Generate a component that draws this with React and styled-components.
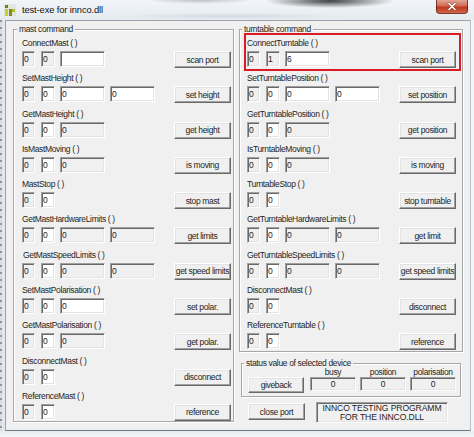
import React from 'react';
import styled, { createGlobalStyle, css } from 'styled-components';

const FONT = `"Liberation Sans", Arial, sans-serif`;

const Global = createGlobalStyle`
  html, body { margin: 0; padding: 0; overflow: hidden; background: #eef1f4; }
  body { width: 474px; height: 437px; }
  *, *::before, *::after { box-sizing: border-box; }
`;

const Window = styled.div`
  width: 474px;
  height: 437px;
  display: flex;
  flex-direction: column;
  overflow: hidden;
  font-family: ${FONT};
  color: #1e1e1e;
`;

const TitleBar = styled.div`
  height: 20px;
  flex: none;
  display: flex;
  align-items: center;
  padding-left: 4px;
  background:
    radial-gradient(ellipse 64px 7px at 330px 1px, rgba(35, 35, 35, 0.85), rgba(35, 35, 35, 0)),
    radial-gradient(ellipse 55px 4px at 200px 0px, rgba(70, 70, 70, 0.3), rgba(70, 70, 70, 0)),
    radial-gradient(ellipse 110px 3px at 230px 16px, rgba(120, 130, 140, 0.18), rgba(120, 130, 140, 0)),
    linear-gradient(#f2f5f8, #e5eaef);
`;

const AppIcon = styled.svg`
  width: 12px;
  height: 12px;
  flex: none;
`;

const TitleText = styled.div`
  margin-left: 6px;
  font-size: 9.3px;
  letter-spacing: -0.1px;
  color: #111;
  white-space: nowrap;
`;

const CloseButton = styled.div`
  margin-left: auto;
  margin-right: 6px;
  align-self: flex-start;
  width: 32px;
  height: 14px;
  display: flex;
  align-items: center;
  justify-content: center;
  border: 1px solid rgba(90, 30, 20, 0.75);
  border-top: none;
  border-radius: 0 0 4px 4px;
  background: linear-gradient(#e3a597 0%, #d06a55 45%, #c0381f 55%, #d0654a 100%);
`;

const FrameBody = styled.div`
  display: flex;
  height: 411px;
  flex: none;
`;

const LeftFrame = styled.div`
  width: 5px;
  flex: none;
  background:
    linear-gradient(90deg, rgba(228, 232, 236, 0) 0 2px, #e3e7eb 2px 100%),
    repeating-linear-gradient(180deg, #8f959b 0 2px, #d9dde1 2px 7px);
`;

const RightFrame = styled.div`
  width: 3px;
  flex: none;
  background: #f3f5f7;
`;

const BottomFrame = styled.div`
  height: 6px;
  flex: none;
  background: linear-gradient(#e9ecef, #f4f6f8);
`;

const Client = styled.div`
  flex: 1;
  display: flex;
  align-items: flex-start;
  gap: 5px;
  padding: 3px 0 0 7px;
  background: #f0f0f0;
  border-top: 1px solid #9aa4af;
  border-left: 1px solid #9aa4af;
  border-right: 1px solid #b9c1c9;
  border-bottom: 1px solid #6f7780;
`;

const Group = styled.fieldset`
  margin: 0;
  min-width: 0;
  width: ${(p) => p.$w}px;
  padding: 2px ${(p) => p.$pr}px ${(p) => p.$pb || 0}px ${(p) => p.$pl}px;
  border: 1px solid #a7a7a7;
  box-shadow: inset 1px 1px 0 #ffffff, 1px 1px 0 #ffffff;
`;

const Legend = styled.legend`
  padding: 0 2px;
  margin-left: ${(p) => p.$ml}px;
  height: 10px;
  font-size: 8.5px;
  line-height: 10px;
  letter-spacing: -0.35px;
  background: #f0f0f0;
  white-space: nowrap;
`;

const RightColumn = styled.div`
  display: flex;
  flex-direction: column;
  width: 224px;
`;

const Rows = styled.div`
  display: flex;
  flex-direction: column;
  gap: 3.3px;
`;

const Row = styled.div`
  position: relative;
  display: flex;
  flex-direction: column;
  ${(p) =>
    p.$highlight &&
    css`
      &::after {
        content: '';
        position: absolute;
        top: -3px;
        left: -3px;
        right: -5px;
        bottom: -3px;
        border: 2.5px solid #dc1c24;
        pointer-events: none;
      }
    `}
`;

const FnLabel = styled.div`
  height: 14px;
  line-height: 14px;
  font-size: 8.5px;
  letter-spacing: -0.35px;
  white-space: nowrap;
  padding-left: ${(p) => p.$indent || 0}px;
`;

const Controls = styled.div`
  height: 18px;
  display: flex;
  align-items: flex-start;
  gap: 5px;
`;

const sunken = css`
  border: 1px solid;
  border-color: #a0a0a0 #ffffff #ffffff #a0a0a0;
  box-shadow: inset 1px 1px 0 #696969, inset -1px -1px 0 #e3e3e3;
`;

const Field = styled.input`
  ${sunken};
  width: ${(p) => p.$w}px;
  height: 16px;
  margin: 1px 0 0 0;
  padding: 0 0 0 1px;
  background: ${(p) => (p.$ro ? '#f0f0f0' : '#ffffff')};
  font-family: ${FONT};
  font-size: 8.5px;
  line-height: 14px;
  color: #1e1e1e;
  outline: none;
  &:nth-child(2) {
    margin-left: 1px;
  }
`;

const raised = css`
  background: #f0f0f0;
  border: 1px solid;
  border-color: #ffffff #696969 #696969 #ffffff;
  box-shadow: inset -1px -1px 0 #a0a0a0, inset 1px 1px 0 #e3e3e3;
  font-family: ${FONT};
  font-size: 8.5px;
  letter-spacing: -0.35px;
  color: #1e1e1e;
  padding: 0;
  white-space: nowrap;
`;

const CmdButton = styled.button`
  ${raised};
  margin: 1px 0 0 auto;
  width: 57px;
  height: 17px;
`;

const StatusGroup = styled(Group)`
  margin: 6px 0 0 2px;
  padding-top: 0;
`;

const StatusGrid = styled.div`
  display: grid;
  grid-template-columns: 58px 46px 46px 46px;
  grid-template-rows: 9px 16px;
  column-gap: 4px;
`;

const ColHead = styled.div`
  grid-row: 1;
  grid-column: ${(p) => p.$col};
  text-align: center;
  font-size: 8.5px;
  line-height: 9px;
  letter-spacing: -0.35px;
  white-space: nowrap;
`;

const GiveButton = styled.button`
  ${raised};
  grid-row: 2;
  grid-column: 1;
  width: 56px;
  height: 16px;
`;

const Value = styled.div`
  ${sunken};
  grid-row: 2;
  grid-column: ${(p) => p.$col};
  height: 14px;
  background: #f0f0f0;
  text-align: center;
  font-size: 8.5px;
  line-height: 12px;
`;

const BottomRow = styled.div`
  display: flex;
  align-items: flex-start;
  margin-top: 5px;
  padding-left: 9px;
`;

const PortButton = styled.button`
  ${raised};
  margin-top: 1px;
  width: 57px;
  height: 17px;
`;

const InfoBox = styled.div`
  ${sunken};
  margin-left: 11px;
  width: 132px;
  height: 21px;
  padding-top: 0.5px;
  background: #f0f0f0;
  text-align: center;
  font-size: 8.6px;
  line-height: 9px;
  letter-spacing: -0.1px;
  white-space: nowrap;
`;

const WIDTHS = [13, 14, 45, 45];

const leftRows = [
  { label: 'ConnectMast ( )', f: [['0', 1], ['0', 1], ['', 0]], btn: 'scan port' },
  { label: 'SetMastHeight ( )', f: [['0', 1], ['0', 0], ['0', 0], ['0', 0]], btn: 'set height' },
  { label: 'GetMastHeight ( )', f: [['0', 1], ['0', 0], ['0', 1]], btn: 'get height' },
  { label: 'IsMastMoving ( )', f: [['0', 1], ['0', 0], ['0', 1]], btn: 'is moving' },
  { label: 'MastStop ( )', f: [['0', 1], ['0', 0]], btn: 'stop mast' },
  { label: 'GetMastHardwareLimits ( )', f: [['0', 1], ['0', 0], ['0', 1], ['0', 1]], btn: 'get limits' },
  { label: 'GetMastSpeedLimits ( )', f: [['0', 1], ['0', 0], ['0', 1], ['0', 1]], btn: 'get speed limits', indent: 1 },
  { label: 'SetMastPolarisation ( )', f: [['0', 1], ['0', 0], ['0', 0]], btn: 'set polar.' },
  { label: 'GetMastPolarisation ( )', f: [['0', 1], ['0', 0], ['0', 1]], btn: 'get polar.' },
  { label: 'DisconnectMast ( )', f: [['0', 1], ['0', 0]], btn: 'disconnect' },
  { label: 'ReferenceMast ( )', f: [['0', 1], ['0', 0]], btn: 'reference' },
];

const rightRows = [
  { label: 'ConnectTurntable ( )', f: [['0', 1], ['1', 1], ['6', 0]], btn: 'scan port', highlight: true },
  { label: 'SetTurntablePosition ( )', f: [['0', 1], ['0', 0], ['0', 0], ['0', 0]], btn: 'set position' },
  { label: 'GetTurntablePosition ( )', f: [['0', 1], ['0', 0], ['0', 1]], btn: 'get position' },
  { label: 'IsTurntableMoving ( )', f: [['0', 1], ['0', 0], ['0', 1]], btn: 'is moving' },
  { label: 'TurntableStop ( )', f: [['0', 1], ['0', 0]], btn: 'stop turntable' },
  { label: 'GetTurntableHardwareLimits ( )', f: [['0', 1], ['0', 0], ['0', 1], ['0', 1]], btn: 'get limit' },
  { label: 'GetTurntableSpeedLimits ( )', f: [['0', 1], ['0', 0], ['0', 1], ['0', 1]], btn: 'get speed limits' },
  { label: 'DisconnectMast ( )', f: [['0', 1], ['0', 0]], btn: 'disconnect' },
  { label: 'ReferenceTurntable ( )', f: [['0', 1], ['0', 0]], btn: 'reference' },
];

function CommandRows({ rows }) {
  return (
    <Rows>
      {rows.map((r, i) => (
        <Row key={i} $highlight={r.highlight}>
          <FnLabel $indent={r.indent}>{r.label}</FnLabel>
          <Controls>
            {r.f.map(([v, ro], j) => (
              <Field key={j} $w={WIDTHS[j]} $ro={!!ro} value={v} readOnly />
            ))}
            <CmdButton type="button">{r.btn}</CmdButton>
          </Controls>
        </Row>
      ))}
    </Rows>
  );
}

export default function App() {
  return (
    <>
      <Global />
      <Window>
        <TitleBar>
          <AppIcon viewBox="0 0 12 12">
            <rect x="0" y="0" width="12" height="12" fill="#cfd0c4" opacity="0.35" />
            <rect x="1" y="1" width="3" height="3" fill="#6f7f16" />
            <rect x="1" y="5" width="3" height="7" fill="#c9d022" />
            <rect x="5" y="5" width="3" height="7" fill="#7d8c1c" />
            <rect x="8" y="5" width="3" height="3" fill="#b3bc22" />
          </AppIcon>
          <TitleText>test-exe for innco.dll</TitleText>
          <CloseButton>
            <svg width="10" height="9" viewBox="0 0 10 9">
              <path d="M2 1.5 L8 7.5 M8 1.5 L2 7.5" stroke="#5a1a10" strokeWidth="2.6" strokeLinecap="round" opacity="0.5" />
              <path d="M2 1.5 L8 7.5 M8 1.5 L2 7.5" stroke="#ffffff" strokeWidth="1.7" strokeLinecap="round" />
            </svg>
          </CloseButton>
        </TitleBar>
        <FrameBody>
          <LeftFrame />
          <Client>
            <Group $w={221} $pl={8} $pr={2}>
              <Legend $ml={-5}>mast command</Legend>
              <CommandRows rows={leftRows} />
            </Group>
            <RightColumn>
              <Group $w={224} $pl={7} $pr={6} $pb={1}>
                <Legend $ml={-5}>turntable command</Legend>
                <CommandRows rows={rightRows} />
              </Group>
              <StatusGroup $w={220} $pl={6} $pr={2} $pb={3}>
                <Legend $ml={-4}>status value of selected device</Legend>
                <StatusGrid>
                  <ColHead $col={2}>busy</ColHead>
                  <ColHead $col={3}>position</ColHead>
                  <ColHead $col={4}>polarisation</ColHead>
                  <GiveButton type="button">giveback</GiveButton>
                  <Value $col={2}>0</Value>
                  <Value $col={3}>0</Value>
                  <Value $col={4}>0</Value>
                </StatusGrid>
              </StatusGroup>
              <BottomRow>
                <PortButton type="button">close port</PortButton>
                <InfoBox>
                  INNCO TESTING PROGRAMM
                  <br />
                  FOR THE INNCO.DLL
                </InfoBox>
              </BottomRow>
            </RightColumn>
          </Client>
          <RightFrame />
        </FrameBody>
        <BottomFrame />
      </Window>
    </>
  );
}
